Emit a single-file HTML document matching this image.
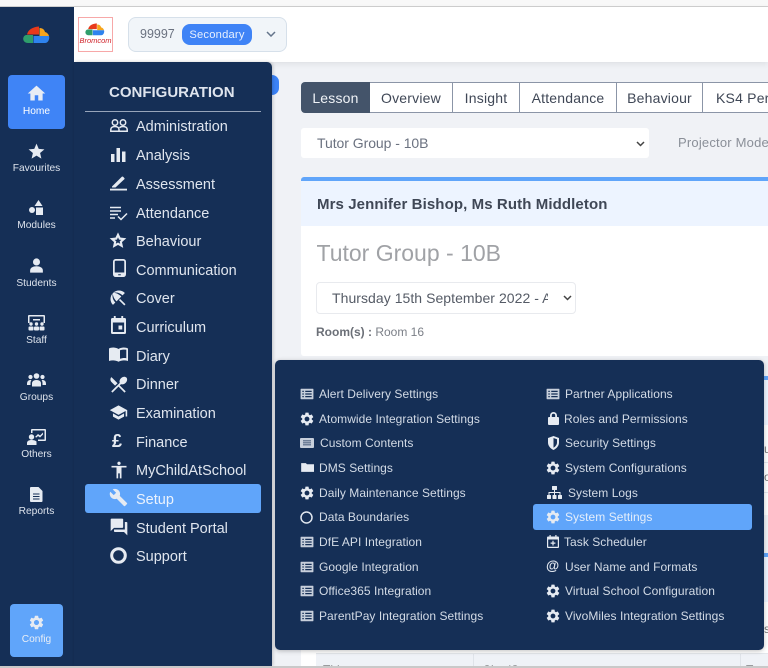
<!DOCTYPE html>
<html><head><meta charset="utf-8"><style>
*{box-sizing:border-box}
html,body{margin:0;padding:0;width:768px;height:668px;overflow:hidden;background:#f0f2f6;font-family:"Liberation Sans",sans-serif}
.a{position:absolute}
.t{position:absolute;white-space:nowrap}
svg{position:absolute;display:block;fill:#e6ebf2}
.sl{position:absolute;left:0;width:73px;text-align:center;font-size:10.2px;line-height:14px;margin-top:2px;color:#dde3ec;white-space:nowrap}
.m{position:absolute;left:136px;font-size:14.5px;line-height:20px;margin-top:1px;color:#dfe5ee;white-space:nowrap}
.s{position:absolute;font-size:12px;line-height:16px;color:#d3dbe6;white-space:nowrap;letter-spacing:.05px}
.tab{position:absolute;top:82px;height:31px;background:#fff;border:1px solid #8b95a7;border-left:0;font-size:14px;line-height:30px;text-align:center;color:#3f4756;letter-spacing:.2px;white-space:nowrap;overflow:hidden}
</style></head><body>
<svg width="0" height="0" style="position:absolute"><defs>
<symbol id="gear" viewBox="0 0 24 24"><path d="M19.14 12.94c.04-.3.06-.61.06-.94 0-.32-.02-.64-.07-.94l2.03-1.58c.18-.14.23-.41.12-.61l-1.92-3.32c-.12-.22-.37-.29-.59-.22l-2.39.96c-.5-.38-1.03-.7-1.62-.94l-.36-2.54c-.04-.24-.24-.41-.48-.41h-3.84c-.24 0-.43.17-.47.41l-.36 2.54c-.59.24-1.13.57-1.62.94l-2.39-.96c-.22-.08-.47 0-.59.22L2.74 8.87c-.12.21-.08.47.12.61l2.03 1.58c-.05.3-.09.63-.09.94s.02.64.07.94l-2.03 1.58c-.18.14-.23.41-.12.61l1.92 3.32c.12.22.37.29.59.22l2.39-.96c.5.38 1.03.7 1.62.94l.36 2.54c.05.24.24.41.48.41h3.84c.24 0 .44-.17.47-.41l.36-2.54c.59-.24 1.13-.56 1.62-.94l2.39.96c.22.08.47 0 .59-.22l1.92-3.32c.12-.22.07-.47-.12-.61l-2.01-1.58zM12 15.6c-1.98 0-3.6-1.62-3.6-3.6s1.62-3.6 3.6-3.6 3.6 1.62 3.6 3.6-1.62 3.6-3.6 3.6z"/></symbol>
<symbol id="list" viewBox="0 0 24 24"><path fill-rule="evenodd" d="M2 3h20a1 1 0 0 1 1 1v16a1 1 0 0 1-1 1H2a1 1 0 0 1-1-1V4a1 1 0 0 1 1-1zm2 3.500v2h2.500v-2zm5 0v2h11v-2zm-5 4.500v2h2.500v-2zm5 0v2h11v-2zm-5 4.500v2h2.500v-2zm5 0v2h11v-2z" opacity=".85"/></symbol>
<symbol id="cloud" viewBox="0 0 27 18"><path d="M4 8.500C5 4 9 1 16 .5V8.500z" fill="#e8391a"/><path d="M16.500 2C20 2 21.500 4 22 6c2 .5 3.500 2 4 4H16.500z" fill="#f6a51c"/><path d="M10 9v8H5C-1 17-1 10 3 9z" fill="#2f9e6b"/><path d="M10.500 10H26c1 3-1 7-4 7H10.500z" fill="#2e83ee"/></symbol>
</defs></svg>

<!-- top strip -->
<div class="a" style="left:0;top:0;width:768px;height:6px;background:#f8f8f8"></div>
<div class="a" style="left:0;top:6px;width:768px;height:1px;background:#cfcfcf"></div>

<!-- header -->
<div class="a" style="left:74px;top:7px;width:694px;height:55px;background:#fff;box-shadow:0 2px 6px rgba(0,0,0,.08)"></div>
<div class="a" style="left:78px;top:17px;width:35px;height:35px;border:1px solid #f7a8a8;background:#fff"></div>
<svg style="left:85px;top:23px" width="20" height="13"><use href="#cloud"/></svg>
<div class="t" style="left:79px;top:37px;width:33px;text-align:center;font-size:7.5px;line-height:8px;color:#d0232a;font-style:italic">Bromcom</div>
<div class="a" style="left:128px;top:17px;width:159px;height:35px;background:#f1f5f9;border:1px solid #d6e0ea;border-radius:8px"></div>
<div class="t" style="left:140px;top:27px;font-size:12.5px;line-height:15px;color:#6b7280">99997</div>
<div class="a" style="left:182px;top:24px;width:70px;height:21px;background:#3f83f6;border-radius:8px;text-align:center;font-size:11.2px;line-height:22px;color:#e8f0fe;letter-spacing:.2px">Secondary</div>
<svg style="left:266px;top:31px;fill:none" width="10" height="6" viewBox="0 0 10 6"><path d="M1 1l4 4 4-4" stroke="#64748b" stroke-width="1.5"/></svg>

<!-- main -->
<div class="a" style="left:272px;top:75px;width:7px;height:20px;background:#3b82f6;border-radius:0 10px 10px 0"></div>
<div class="a" style="left:301px;top:82px;width:69px;height:31px;background:#44546a;border-radius:4px 0 0 4px;color:#f0f3f7;font-size:14px;line-height:32px;text-align:center;letter-spacing:.2px">Lesson</div>
<div class="tab" style="left:370px;width:83px">Overview</div>
<div class="tab" style="left:453px;width:67px">Insight</div>
<div class="tab" style="left:520px;width:97px">Attendance</div>
<div class="tab" style="left:617px;width:86px">Behaviour</div>
<div class="tab" style="left:703px;width:70px;border-right:0;text-align:left;padding-left:13px">KS4 Performance</div>

<div class="a" style="left:301px;top:128px;width:348px;height:30px;background:#fff;border-radius:3px"></div>
<div class="t" style="left:317px;top:135px;font-size:14px;line-height:16px;color:#6b7280;letter-spacing:-.05px">Tutor Group - 10B</div>
<svg style="left:636px;top:141px;fill:none" width="9" height="6" viewBox="0 0 9 6"><path d="M1 1l3.500 3.500L8 1" stroke="#444" stroke-width="1.5"/></svg>
<div class="t" style="left:678px;top:135px;font-size:13px;line-height:16px;color:#8a8f98;letter-spacing:.2px">Projector Mode</div>

<div class="a" style="left:301px;top:177px;width:467px;height:179px;background:#fff;border-top:4px solid #60a5fa;border-radius:3px 0 0 3px"></div>
<div class="a" style="left:301px;top:181px;width:467px;height:45px;background:#edf4ff"></div>
<div class="t" style="left:317px;top:196px;font-size:15px;line-height:18px;font-weight:bold;color:#3f4756;letter-spacing:.1px">Mrs Jennifer Bishop, Ms Ruth Middleton</div>
<div class="t" style="left:316.500px;top:239px;font-size:23px;line-height:28px;color:#a0a2a6">Tutor Group - 10B</div>
<div class="a" style="left:316px;top:282px;width:260px;height:32px;background:#fff;border:1px solid #e8eaee;border-radius:4px"></div>
<div class="t" style="left:332px;top:290px;width:216px;overflow:hidden;font-size:14px;line-height:16px;color:#555b66;letter-spacing:.05px">Thursday 15th September 2022 - AM</div>
<svg style="left:563px;top:295px;fill:none" width="9" height="6" viewBox="0 0 9 6"><path d="M1 1l3.500 3.500L8 1" stroke="#444" stroke-width="1.5"/></svg>
<div class="t" style="left:316px;top:325px;font-size:12px;line-height:15px;color:#7b7f87"><b style="color:#6b6f77">Room(s) :</b> Room 16</div>

<!-- behind panel slivers -->
<div class="a" style="left:301px;top:376px;width:467px;height:139px;background:#fff"></div>
<div class="a" style="left:301px;top:376px;width:467px;height:4px;background:#60a5fa"></div>
<div class="a" style="left:301px;top:380px;width:467px;height:45px;background:#edf4ff"></div>
<div class="a" style="left:301px;top:462px;width:467px;height:1px;background:#e4e7ec"></div>
<div class="a" style="left:301px;top:492px;width:467px;height:1px;background:#e4e7ec"></div>
<div class="t" style="left:764px;top:442px;font-size:12px;line-height:14px;color:#777">u</div>
<div class="t" style="left:764px;top:470px;font-size:12px;line-height:14px;color:#777">o</div>
<div class="a" style="left:301px;top:555px;width:467px;height:111px;background:#fff"></div>
<div class="a" style="left:301px;top:553px;width:467px;height:4px;background:#60a5fa"></div>
<div class="a" style="left:301px;top:557px;width:467px;height:45px;background:#edf4ff"></div>
<div class="t" style="left:764px;top:622px;font-size:12px;line-height:14px;color:#777">s</div>
<div class="a" style="left:316px;top:653px;width:452px;height:13px;background:#eff2f7;border-top:1px solid #e3e6eb;overflow:hidden">
<div class="t" style="left:7px;top:9px;font-size:12px;line-height:14px;color:#444">This</div>
<div class="t" style="left:167px;top:9px;font-size:12px;line-height:14px;color:#444">Sign/O</div>
<div class="t" style="left:430px;top:9px;font-size:12px;line-height:14px;color:#444">T</div>
<div class="a" style="left:157px;top:0;width:1px;height:13px;background:#dfe3e9"></div>
<div class="a" style="left:424px;top:0;width:1px;height:13px;background:#dfe3e9"></div>
</div>

<!-- sidebar -->
<div class="a" style="left:0;top:7px;width:74px;height:659px;background:#152f56"></div>
<svg style="left:23px;top:26px" width="27" height="18"><use href="#cloud"/></svg>

<div class="a" style="left:8px;top:75px;width:57px;height:54px;background:#3f84f6;border-radius:4px"></div>
<svg style="left:26px;top:83px;fill:#e8edf5" width="21" height="21" viewBox="0 0 24 24"><path d="M10 20v-6h4v6h5v-8h3L12 3 2 12h3v8z"/></svg>
<div class="sl" style="top:103px;color:#fff">Home</div>

<svg style="left:27px;top:142px" width="19" height="19" viewBox="0 0 24 24"><path d="M12 17.270L18.180 21l-1.640-7.030L22 9.240l-7.190-.61L12 2 9.190 8.630 2 9.240l5.460 4.730L5.820 21z"/></svg>
<div class="sl" style="top:160px">Favourites</div>

<svg style="left:29px;top:200px" width="15" height="16" viewBox="0 0 15 16"><path d="M9.500 0l4 6h-8z"/><circle cx="3" cy="10" r="3"/><rect x="7" y="7.500" width="7" height="7.500"/></svg>
<div class="sl" style="top:217px">Modules</div>

<svg style="left:28px;top:257px" width="17" height="17" viewBox="0 0 24 24"><circle cx="12" cy="7" r="5"/><path d="M3 22v-3c0-4 4-6 9-6s9 2 9 6v3z"/></svg>
<div class="sl" style="top:274.5px">Students</div>

<svg style="left:27px;top:315px" width="19" height="16" viewBox="0 0 19 16"><path fill-rule="evenodd" d="M2 0h15a1 1 0 0 1 1 1v7h-1.500V1.500h-14V8H1V1a1 1 0 0 1 1-1z"/><rect x="6" y="4" width="7" height="1.500"/><circle cx="4" cy="9" r="1.700"/><circle cx="9.500" cy="9" r="1.700"/><circle cx="15" cy="9" r="1.700"/><rect x="1.500" y="11.500" width="5" height="4" rx="1"/><rect x="7" y="11.500" width="5" height="4" rx="1"/><rect x="12.500" y="11.500" width="5" height="4" rx="1"/></svg>
<div class="sl" style="top:331.5px">Staff</div>

<svg style="left:27px;top:373px" width="19" height="14" viewBox="0 0 19 14"><circle cx="9.500" cy="3" r="2.800"/><circle cx="3.500" cy="4" r="2.100"/><circle cx="15.500" cy="4" r="2.100"/><path d="M5 13.500v-3c0-2.500 2-3.500 4.500-3.500s4.500 1 4.500 3.500v3z"/><path d="M0 11c0-3 1.500-4 3.500-4 .6 0 .9.100.9.100C3.800 8 3.500 9 3.500 10.500V12H0z"/><path d="M19 11c0-3-1.500-4-3.500-4-.6 0-.9.100-.9.100.6.900.9 1.900.9 3.400V12H19z"/></svg>
<div class="sl" style="top:389px">Groups</div>

<svg style="left:27px;top:429px" width="19" height="16" viewBox="0 0 19 16"><path fill-rule="evenodd" d="M5 0h13a1 1 0 0 1 1 1v10a1 1 0 0 1-1 1h-7v-1.500h6.500v-9h-12V4H4V1a1 1 0 0 1 1-1z"/><path d="M8 8l3-3 2 1.500L16 3.500v2L13 8.500 11 7 9.500 8.500z"/><circle cx="4.500" cy="8" r="2.700"/><path d="M0 16v-2c0-2 2-3 4.500-3s4 .5 5 1.500V16z"/></svg>
<div class="sl" style="top:446px">Others</div>

<svg style="left:30px;top:487px" width="13" height="15" viewBox="0 0 13 15"><path fill-rule="evenodd" d="M1 0h7.500L12.500 4v10a1 1 0 0 1-1 1H1a1 1 0 0 1-1-1V1a1 1 0 0 1 1-1zm2 6.500v1h6.500v-1zm0 2.500v1h6.500V9zm0 2.500v1h6.500v-1z"/></svg>
<div class="sl" style="top:503px">Reports</div>

<div class="a" style="left:10px;top:604px;width:53px;height:53px;background:#60a5fa;border-radius:4px"></div>
<svg style="left:28px;top:614px" width="17" height="17"><use href="#gear"/></svg>
<div class="sl" style="top:631px;color:#e8eef6">Config</div>

<!-- config panel -->
<div class="a" style="left:74px;top:62px;width:198px;height:604px;background:#152f56;border-radius:0 5px 0 0;box-shadow:1px 0 3px rgba(0,0,0,.2)"></div>
<div class="t" style="left:109px;top:84px;font-size:15px;line-height:18px;font-weight:bold;color:#dfe5ee">CONFIGURATION</div>
<div class="a" style="left:85px;top:111px;width:176px;height:1px;background:#97a5ba"></div>

<svg style="left:110px;top:119px;fill:none;stroke:#e6ebf2;stroke-width:1.5" width="18" height="13" viewBox="0 0 18 13"><circle cx="5" cy="3.500" r="2.700"/><circle cx="13" cy="3.500" r="2.700"/><path d="M.8 12.200v-1.700c0-2 2-3 4.200-3s4 1 4 3v1.700zM9 12.200h8.200v-1.700c0-2-2-3-4.200-3-1.500 0-2.800.4-3.500 1.200"/></svg>
<div class="m" style="top:116px">Administration</div>

<svg style="left:111px;top:148px" width="15" height="14" viewBox="0 0 15 14"><rect x="0" y="6" width="3.500" height="8"/><rect x="5.500" y="0" width="3.500" height="14"/><rect x="11" y="3.500" width="3.500" height="10.500"/></svg>
<div class="m" style="top:145px">Analysis</div>

<svg style="left:110px;top:174px" width="17" height="17" viewBox="0 0 17 17"><path d="M2 12.500L11.800 2.800c.4-.4.9-.4 1.300 0l1.200 1.200c.4.400.4.900 0 1.300L5.500 13.500H2z"/><rect x="0" y="14.700" width="17" height="1.800"/></svg>
<div class="m" style="top:174px">Assessment</div>

<svg style="left:110px;top:206px;stroke:#e6ebf2;stroke-width:1.5;fill:none" width="18" height="15" viewBox="0 0 18 15"><path d="M0 1.500h11M0 5h11M0 8.500h8M0 12h5M8 10.500l3 3 6-6"/></svg>
<div class="m" style="top:202.5px">Attendance</div>

<svg style="left:109px;top:232px;fill:none;stroke:#e6ebf2;stroke-width:3" width="18" height="17" viewBox="0 0 24 24"><path d="M12 4l2.500 5.300 5.800.6-4.300 3.900 1.200 5.700L12 16.600l-5.200 2.900 1.200-5.700-4.300-3.900 5.800-.6z"/></svg>
<div class="m" style="top:231px">Behaviour</div>

<svg style="left:113px;top:259px" width="13" height="18" viewBox="0 0 15 20" preserveAspectRatio="none"><path fill-rule="evenodd" d="M3 0h9a3 3 0 0 1 3 3v14a3 3 0 0 1-3 3H3a3 3 0 0 1-3-3V3a3 3 0 0 1 3-3zM2 3v12h11V3a1 1 0 0 0-1-1H3a1 1 0 0 0-1 1zm4 14v1h3v-1z"/></svg>
<div class="m" style="top:259.7px">Communication</div>

<svg style="left:108px;top:288px" width="20" height="20" viewBox="0 0 24 24"><path d="M13.127 14.560l1.430-1.430 6.440 6.443L19.570 21zm4.293-5.730l2.860-2.860c-3.950-3.950-10.350-3.960-14.300-.02 3.930-1.300 8.310-.25 11.440 2.880zM5.950 5.980c-3.940 3.950-3.930 10.350.02 14.300l2.860-2.860C5.700 14.290 4.650 9.910 5.950 5.980zm.02-.02l-.01.01c-.38 3.010 1.170 6.880 4.300 10.020l5.730-5.730c-3.130-3.130-7.010-4.680-10.020-4.300z"/></svg>
<div class="m" style="top:288.3px">Cover</div>

<svg style="left:111px;top:316px" width="15" height="18" viewBox="0 0 16 18" preserveAspectRatio="none"><path fill-rule="evenodd" d="M3 0h2v2h6V0h2v2h1.500A1.500 1.500 0 0 1 16 3.500v13a1.500 1.500 0 0 1-1.500 1.500h-13A1.500 1.500 0 0 1 0 16.500v-13A1.500 1.500 0 0 1 1.500 2H3zM2 6.500V16h12V6.500zm6 3h4v4H8z"/></svg>
<div class="m" style="top:317px">Curriculum</div>

<svg style="left:109px;top:347px" width="19" height="15" viewBox="0 0 19 15"><path fill-rule="evenodd" d="M0 1.500C2.500.3 6 0 9.500 2 13 0 16.500.3 19 1.500V14c-3-1-6.500-1-9.500.8C6.500 13 3 13 0 14zM11 3.300v8.500c2-.8 4.500-1 6.300-.6V2.800c-2-.4-4.300-.2-6.300.5z"/></svg>
<div class="m" style="top:345.7px">Diary</div>

<svg style="left:108px;top:374px" width="21" height="21" viewBox="0 0 24 24"><path d="M8.100 13.340l2.830-2.830L3.910 3.500c-1.560 1.560-1.560 4.090 0 5.660l4.190 4.180zm6.780-1.810c1.530.71 3.680.21 5.270-1.380 1.910-1.910 2.280-4.650.81-6.120-1.460-1.460-4.200-1.100-6.120.81-1.590 1.590-2.090 3.740-1.380 5.270L3.700 19.870l1.410 1.410L12 14.410l6.880 6.880 1.410-1.410L13.410 13l1.470-1.470z"/></svg>
<div class="m" style="top:374.3px">Dinner</div>

<svg style="left:109px;top:403px" width="19" height="19" viewBox="0 0 24 24"><path d="M5 13.180v4L12 21l7-3.820v-4L12 17l-7-3.820zM12 3L1 9l11 6 9-4.910V17h2V9L12 3z"/></svg>
<div class="m" style="top:403px">Examination</div>

<div class="t" style="left:112px;top:431px;font-size:18px;line-height:20px;font-weight:bold;color:#e6ebf2">£</div>
<div class="m" style="top:431.7px">Finance</div>

<svg style="left:109px;top:460px" width="20" height="20" viewBox="0 0 24 24"><path d="M12 2c1.100 0 2 .9 2 2s-.9 2-2 2-2-.9-2-2 .9-2 2-2zm9 7h-6v13h-2v-6h-2v6H9V9H3V7h18v2z"/></svg>
<div class="m" style="top:460.3px">MyChildAtSchool</div>

<div class="a" style="left:85px;top:484px;width:176px;height:29px;background:#60a5fa;border-radius:3px"></div>
<svg style="left:109px;top:488px" width="19" height="19" viewBox="0 0 24 24"><path d="M22.700 19l-9.100-9.100c.9-2.300.4-5-1.500-6.900-2-2-5-2.400-7.400-1.300L9 6 6 9 1.600 4.700C.4 7.100.9 10.100 2.900 12.100c1.900 1.900 4.600 2.400 6.900 1.500l9.100 9.100c.4.400 1 .4 1.400 0l2.300-2.300c.5-.4.500-1.100.1-1.400z"/></svg>
<div class="m" style="top:489px;color:#eaf2fd">Setup</div>

<svg style="left:109px;top:517px" width="20" height="20" viewBox="0 0 24 24"><path d="M21 6h-2v9H6v2c0 .55.45 1 1 1h11l4 4V7c0-.55-.45-1-1-1zm-4 6V3c0-.55-.45-1-1-1H3c-.55 0-1 .45-1 1v14l4-4h10c.55 0 1-.45 1-1z"/></svg>
<div class="m" style="top:517.7px">Student Portal</div>

<svg style="left:110px;top:547px;fill:none;stroke:#e6ebf2;stroke-width:3" width="17" height="17" viewBox="0 0 17 17"><circle cx="8.500" cy="8.500" r="6.800"/></svg>
<div class="m" style="top:546px">Support</div>

<!-- flyout -->
<div class="a" style="left:275px;top:360px;width:489px;height:290px;background:#152f56;border-radius:5px;box-shadow:0 1px 5px rgba(0,0,0,.25)"></div>
<div class="a" style="left:533px;top:504px;width:219px;height:26px;background:#60a5fa;border-radius:3px"></div>

<svg style="left:300px;top:387px" width="14" height="14"><use href="#list"/></svg>
<div class="s" style="left:319px;top:386px">Alert Delivery Settings</div>
<svg style="left:299px;top:411px" width="16" height="16"><use href="#gear"/></svg>
<div class="s" style="left:319px;top:411px">Atomwide Integration Settings</div>
<svg style="left:300px;top:438px" width="14" height="10" viewBox="0 0 14 10"><path fill-rule="evenodd" d="M1 0h12a1 1 0 0 1 1 1v8a1 1 0 0 1-1 1H1a1 1 0 0 1-1-1V1a1 1 0 0 1 1-1zm2 2.500v.8h8v-.8zm0 2v.8h8v-.8zm0 2v.8h8v-.8z" opacity=".85"/></svg>
<div class="s" style="left:320px;top:435px">Custom Contents</div>
<svg style="left:300px;top:461px" width="14" height="13" viewBox="0 0 24 24" preserveAspectRatio="none"><path d="M10 4H2v16h22V6H12z"/></svg>
<div class="s" style="left:319px;top:460px">DMS Settings</div>
<svg style="left:299px;top:485px" width="16" height="16"><use href="#gear"/></svg>
<div class="s" style="left:319px;top:485px">Daily Maintenance Settings</div>
<svg style="left:300px;top:511px;fill:none;stroke:#e0e6ee;stroke-width:1.5" width="13" height="13" viewBox="0 0 13 13"><circle cx="6.500" cy="6.500" r="5.500"/></svg>
<div class="s" style="left:319px;top:509px">Data Boundaries</div>
<svg style="left:300px;top:535px" width="14" height="14"><use href="#list"/></svg>
<div class="s" style="left:319px;top:534px">DfE API Integration</div>
<svg style="left:300px;top:560px" width="14" height="14"><use href="#list"/></svg>
<div class="s" style="left:319px;top:558.5px">Google Integration</div>
<svg style="left:300px;top:584px" width="14" height="14"><use href="#list"/></svg>
<div class="s" style="left:319px;top:583px">Office365 Integration</div>
<svg style="left:300px;top:609px" width="14" height="14"><use href="#list"/></svg>
<div class="s" style="left:319px;top:608px">ParentPay Integration Settings</div>

<svg style="left:546px;top:387px" width="14" height="14"><use href="#list"/></svg>
<div class="s" style="left:565px;top:386px">Partner Applications</div>
<svg style="left:547px;top:412px" width="13" height="13" viewBox="0 0 13 13"><path fill-rule="evenodd" d="M6.500 0A3.500 3.500 0 0 1 10 3.500V5h1a1 1 0 0 1 1 1v6a1 1 0 0 1-1 1H2a1 1 0 0 1-1-1V6a1 1 0 0 1 1-1h1V3.500A3.500 3.500 0 0 1 6.500 0zM4.800 5h3.400V3.500a1.700 1.700 0 0 0-3.400 0z"/></svg>
<div class="s" style="left:564px;top:411px">Roles and Permissions</div>
<svg style="left:547px;top:436px" width="13" height="14" viewBox="0 0 13 14"><path fill-rule="evenodd" d="M6.500 0L12 2v4.500c0 3.300-2.300 6-5.500 7.500C3.300 12.500 1 9.800 1 6.500V2zm0 2v9.700c2-1.200 3.500-3 3.500-5.200V3.300z"/></svg>
<div class="s" style="left:565px;top:435px">Security Settings</div>
<svg style="left:545px;top:460px" width="16" height="16"><use href="#gear"/></svg>
<div class="s" style="left:565px;top:460px">System Configurations</div>
<svg style="left:547px;top:486px" width="15" height="13" viewBox="0 0 15 13"><rect x="5" y="0" width="5" height="4" rx=".5"/><rect x="0" y="9" width="4" height="4" rx=".5"/><rect x="5.500" y="9" width="4" height="4" rx=".5"/><rect x="11" y="9" width="4" height="4" rx=".5"/><path d="M7 4h1v2h5.500v3h-1V7H8v2H7V7H2.500v2h-1V6H7z"/></svg>
<div class="s" style="left:568px;top:485px">System Logs</div>
<svg style="left:545px;top:509px" width="16" height="16"><use href="#gear"/></svg>
<div class="s" style="left:565px;top:509px;color:#e4eefb">System Settings</div>
<svg style="left:547px;top:535px" width="12" height="13" viewBox="0 0 12 13"><path fill-rule="evenodd" d="M2.500 0h1.200v1.500h4.600V0h1.200v1.500H11a1 1 0 0 1 1 1V12a1 1 0 0 1-1 1H1a1 1 0 0 1-1-1V2.500a1 1 0 0 1 1-1h1.500zM1.200 4.500v7.300h9.600V4.500zM5.400 5.700h1.200v1.800h1.800v1.200H6.600v1.800H5.400V8.700H3.600V7.500h1.800z"/></svg>
<div class="s" style="left:564px;top:534px">Task Scheduler</div>
<div class="t" style="left:546px;top:558px;font-size:13.5px;line-height:16px;font-weight:bold;color:#dfe5ee">@</div>
<div class="s" style="left:565px;top:558.5px">User Name and Formats</div>
<svg style="left:545px;top:583px" width="16" height="16"><use href="#gear"/></svg>
<div class="s" style="left:565px;top:583px">Virtual School Configuration</div>
<svg style="left:545px;top:608px" width="16" height="16"><use href="#gear"/></svg>
<div class="s" style="left:565px;top:608px">VivoMiles Integration Settings</div>

<!-- bottom strip -->
<div class="a" style="left:0;top:666px;width:768px;height:2px;background:#c9c9c9"></div>
</body></html>
